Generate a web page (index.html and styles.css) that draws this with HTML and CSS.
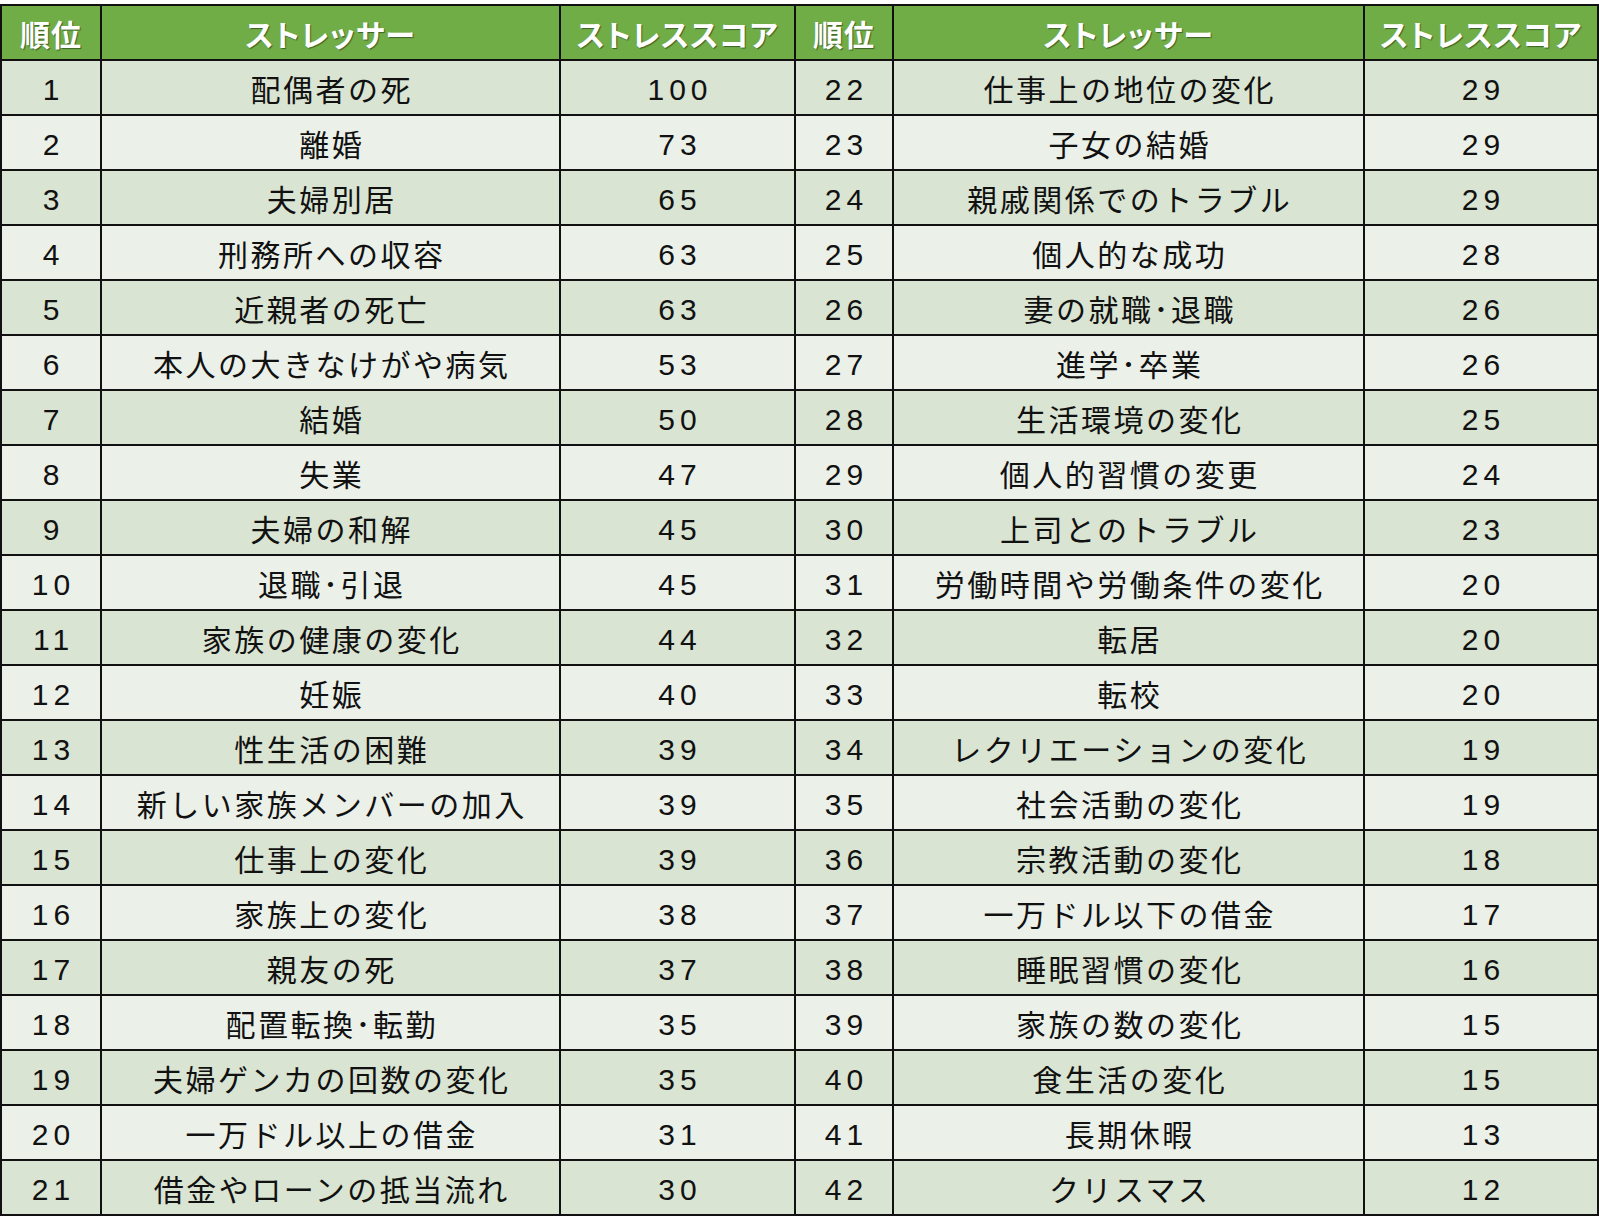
FILE: index.html
```html
<!DOCTYPE html>
<html lang="ja">
<head>
<meta charset="utf-8">
<title>ストレススコア</title>
<link rel="stylesheet" href="styles.css">
</head>
<body>
<table class="stress">
  <colgroup>
    <col class="c-rank"><col class="c-name"><col class="c-score">
    <col class="c-rank2"><col class="c-name2"><col class="c-score2">
  </colgroup>
  <thead>
    <tr>
      <th>順位</th><th>ストレッサー</th><th>ストレススコア</th>
      <th>順位</th><th>ストレッサー</th><th>ストレススコア</th>
    </tr>
  </thead>
  <tbody>
    <tr><td class="n">1</td><td class="t">配偶者の死</td><td class="n">100</td><td class="n">22</td><td class="t">仕事上の地位の変化</td><td class="n">29</td></tr>
    <tr><td class="n">2</td><td class="t">離婚</td><td class="n">73</td><td class="n">23</td><td class="t">子女の結婚</td><td class="n">29</td></tr>
    <tr><td class="n">3</td><td class="t">夫婦別居</td><td class="n">65</td><td class="n">24</td><td class="t">親戚関係でのトラブル</td><td class="n">29</td></tr>
    <tr><td class="n">4</td><td class="t">刑務所への収容</td><td class="n">63</td><td class="n">25</td><td class="t">個人的な成功</td><td class="n">28</td></tr>
    <tr><td class="n">5</td><td class="t">近親者の死亡</td><td class="n">63</td><td class="n">26</td><td class="t">妻の就職･退職</td><td class="n">26</td></tr>
    <tr><td class="n">6</td><td class="t">本人の大きなけがや病気</td><td class="n">53</td><td class="n">27</td><td class="t">進学･卒業</td><td class="n">26</td></tr>
    <tr><td class="n">7</td><td class="t">結婚</td><td class="n">50</td><td class="n">28</td><td class="t">生活環境の変化</td><td class="n">25</td></tr>
    <tr><td class="n">8</td><td class="t">失業</td><td class="n">47</td><td class="n">29</td><td class="t">個人的習慣の変更</td><td class="n">24</td></tr>
    <tr><td class="n">9</td><td class="t">夫婦の和解</td><td class="n">45</td><td class="n">30</td><td class="t">上司とのトラブル</td><td class="n">23</td></tr>
    <tr><td class="n">10</td><td class="t">退職･引退</td><td class="n">45</td><td class="n">31</td><td class="t">労働時間や労働条件の変化</td><td class="n">20</td></tr>
    <tr><td class="n">11</td><td class="t">家族の健康の変化</td><td class="n">44</td><td class="n">32</td><td class="t">転居</td><td class="n">20</td></tr>
    <tr><td class="n">12</td><td class="t">妊娠</td><td class="n">40</td><td class="n">33</td><td class="t">転校</td><td class="n">20</td></tr>
    <tr><td class="n">13</td><td class="t">性生活の困難</td><td class="n">39</td><td class="n">34</td><td class="t">レクリエーションの変化</td><td class="n">19</td></tr>
    <tr><td class="n">14</td><td class="t">新しい家族メンバーの加入</td><td class="n">39</td><td class="n">35</td><td class="t">社会活動の変化</td><td class="n">19</td></tr>
    <tr><td class="n">15</td><td class="t">仕事上の変化</td><td class="n">39</td><td class="n">36</td><td class="t">宗教活動の変化</td><td class="n">18</td></tr>
    <tr><td class="n">16</td><td class="t">家族上の変化</td><td class="n">38</td><td class="n">37</td><td class="t">一万ドル以下の借金</td><td class="n">17</td></tr>
    <tr><td class="n">17</td><td class="t">親友の死</td><td class="n">37</td><td class="n">38</td><td class="t">睡眠習慣の変化</td><td class="n">16</td></tr>
    <tr><td class="n">18</td><td class="t">配置転換･転勤</td><td class="n">35</td><td class="n">39</td><td class="t">家族の数の変化</td><td class="n">15</td></tr>
    <tr><td class="n">19</td><td class="t">夫婦ゲンカの回数の変化</td><td class="n">35</td><td class="n">40</td><td class="t">食生活の変化</td><td class="n">15</td></tr>
    <tr><td class="n">20</td><td class="t">一万ドル以上の借金</td><td class="n">31</td><td class="n">41</td><td class="t">長期休暇</td><td class="n">13</td></tr>
    <tr><td class="n">21</td><td class="t">借金やローンの抵当流れ</td><td class="n">30</td><td class="n">42</td><td class="t">クリスマス</td><td class="n">12</td></tr>
  </tbody>
</table>
</body>
</html>
```

FILE: styles.css
```css
html, body {
  margin: 0;
  padding: 0;
  background: #ffffff;
}
body {
  padding-top: 4px;
  font-family: "Noto Sans CJK JP", "Liberation Sans", sans-serif;
  color: #111;
}
.stress {
  border-collapse: collapse;
  table-layout: fixed;
  width: 1597px;
}
.c-rank { width: 100px; }
.c-name { width: 459px; }
.c-score { width: 235px; }
.c-rank2 { width: 98px; }
.c-name2 { width: 471px; }
.c-score2 { width: 234px; }

.stress th,
.stress td {
  border: 2px solid #111;
  text-align: center;
  vertical-align: middle;
  padding: 0;
  height: 53px;
  white-space: nowrap;
  overflow: hidden;
}
.stress th {
  background: #70ad47;
  color: #ffffff;
  font-weight: 700;
  font-size: 30px;
  font-feature-settings: "palt";
  letter-spacing: 1px;
  text-shadow: 1px 1px 1px rgba(0, 0, 0, 0.45);
}
.stress tbody tr:nth-child(odd) td { background: #d9e4d2; }
.stress tbody tr:nth-child(even) td { background: #ebf0e9; }

.stress td.t {
  font-size: 30px;
  letter-spacing: 2.5px;
  padding-left: 2.5px;
  font-weight: 400;
}
.stress td.n {
  font-family: "Liberation Sans", "DejaVu Sans", sans-serif;
  font-size: 30px;
  letter-spacing: 5px;
  padding-left: 5px;
  height: 49px;
  padding-top: 4px;
}
```
